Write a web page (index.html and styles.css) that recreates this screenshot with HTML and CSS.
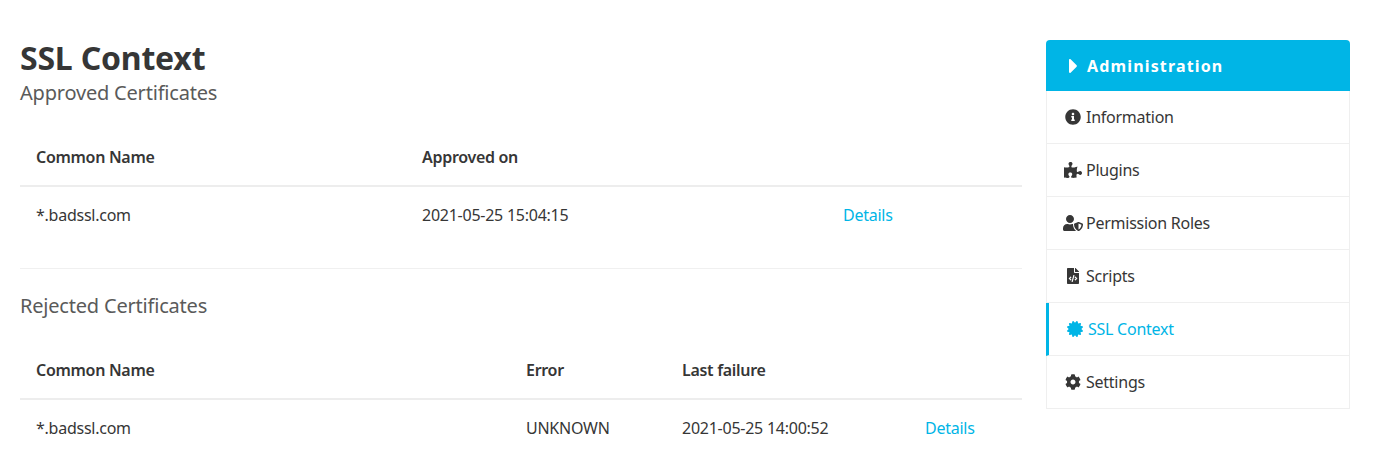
FILE: index.html
```html
<!DOCTYPE html>
<html lang="en">
<head>
<meta charset="utf-8">
<title>SSL Context</title>
<link rel="stylesheet" href="styles.css">
</head>
<body>
<div class="page">
  <main class="content">
    <h1 class="title">SSL Context</h1>
    <h2 class="subtitle first">Approved Certificates</h2>
    <table class="table approved">
      <colgroup><col class="a1"><col class="a2"><col></colgroup>
      <thead><tr><th>Common Name</th><th>Approved on</th><th></th></tr></thead>
      <tbody><tr><td>*.badssl.com</td><td>2021-05-25 15:04:15</td><td><a href="#">Details</a></td></tr></tbody>
    </table>
    <hr class="rule">
    <h2 class="subtitle rejected-title">Rejected Certificates</h2>
    <table class="table rejected">
      <colgroup><col class="r1"><col class="r2"><col class="r3"><col></colgroup>
      <thead><tr><th>Common Name</th><th>Error</th><th>Last failure</th><th></th></tr></thead>
      <tbody><tr><td>*.badssl.com</td><td>UNKNOWN</td><td>2021-05-25 14:00:52</td><td><a href="#">Details</a></td></tr></tbody>
    </table>
  </main>
  <aside class="sidebar">
    <div class="side-head">
      <svg class="caret" viewBox="0 0 192 512"><path d="M0 384.662V127.338c0-17.818 21.543-26.741 34.142-14.142l128.662 128.662c7.81 7.81 7.81 20.474 0 28.284L34.142 398.804C21.543 411.404 0 402.48 0 384.662z"/></svg>
      <span>Administration</span>
    </div>
    <nav class="menu">
      <a class="item" href="#"><span class="ico"><svg class="i16" viewBox="0 0 512 512"><path d="M256 8C119.043 8 8 119.083 8 256c0 136.997 111.043 248 248 248s248-111.003 248-248C504 119.083 392.957 8 256 8zm0 110c23.196 0 42 18.804 42 42s-18.804 42-42 42-42-18.804-42-42 18.804-42 42-42zm56 254c0 6.627-5.373 12-12 12h-88c-6.627 0-12-5.373-12-12v-24c0-6.627 5.373-12 12-12h12v-64h-12c-6.627 0-12-5.373-12-12v-24c0-6.627 5.373-12 12-12h64c6.627 0 12 5.373 12 12v100h12c6.627 0 12 5.373 12 12v24z"/></svg></span>Information</a>
      <a class="item" href="#"><span class="ico"><svg class="i18" viewBox="0 0 576 512"><path d="M519.442 288.651c-41.519 0-59.5 31.593-82.058 31.593C377.409 320.244 432 144 432 144s-196.288 80-196.288-3.297c0-35.827 36.288-46.25 36.288-85.985C272 19.216 243.885 0 210.539 0c-34.654 0-66.366 18.891-66.366 56.346 0 41.364 31.711 59.277 31.711 81.75C175.885 207.719 0 166.758 0 166.758v333.237s178.635 41.047 178.635-28.662c0-22.473-40-40.107-40-81.471 0-37.456 29.25-56.346 63.577-56.346 33.673 0 61.788 19.216 61.788 54.717 0 39.735-36.288 50.158-36.288 85.985 0 60.803 129.675 25.73 181.23 25.73 0 0-34.725-120.101 25.827-120.101 35.962 0 46.423 36.152 86.308 36.152C556.712 416 576 387.99 576 354.443c0-34.199-18.962-65.792-56.558-65.792z"/></svg></span>Plugins</a>
      <a class="item" href="#"><span class="ico"><svg class="i20" viewBox="0 0 640 512"><path d="M622.3 271.1l-115.2-45c-4.1-1.6-12.6-3.7-22.2 0l-115.2 45c-10.7 4.2-17.7 14-17.7 24.9 0 111.6 68.7 188.8 132.9 213.9 9.6 3.7 18 1.6 22.2 0C558.4 489.9 640 420.5 640 296c0-10.9-7-20.7-17.7-24.9zM496 462.4V273.3l95.5 37.3c-5.6 87.1-60.9 135.4-95.5 151.8zM224 256c70.7 0 128-57.3 128-128S294.7 0 224 0 96 57.3 96 128s57.3 128 128 128zm96 40c0-2.5.8-4.8 1.1-7.2-2.5-.1-4.9-.8-7.5-.8h-16.7c-22.2 10.2-46.9 16-72.9 16s-50.6-5.8-72.9-16h-16.7C60.2 288 0 348.2 0 422.4V464c0 26.5 21.5 48 48 48h352c6.8 0 13.3-1.5 19.2-4-54-42.9-99.2-116.7-99.2-212z"/></svg></span>Permission Roles</a>
      <a class="item" href="#"><span class="ico"><svg class="i12" viewBox="0 0 384 512"><path d="M384 121.941V128H256V0h6.059c6.365 0 12.47 2.529 16.971 7.029l97.941 97.941A24.005 24.005 0 0 1 384 121.941zM248 160c-13.2 0-24-10.8-24-24V0H24C10.745 0 0 10.745 0 24v464c0 13.255 10.745 24 24 24h336c13.255 0 24-10.745 24-24V160H248zM123.206 400.505a5.4 5.4 0 0 1-7.633.246l-64.866-60.812a5.4 5.4 0 0 1 0-7.879l64.866-60.812a5.4 5.4 0 0 1 7.633.246l19.579 20.885a5.4 5.4 0 0 1-.372 7.747L101.65 336l40.763 35.874a5.4 5.4 0 0 1 .372 7.747l-19.579 20.884zm51.295 50.479l-27.453-7.97a5.402 5.402 0 0 1-3.681-6.692l61.44-211.626a5.402 5.402 0 0 1 6.692-3.681l27.452 7.97a5.4 5.4 0 0 1 3.68 6.692l-61.44 211.626a5.397 5.397 0 0 1-6.69 3.681zm160.792-111.045l-64.866 60.812a5.4 5.4 0 0 1-7.633-.246l-19.58-20.885a5.4 5.4 0 0 1 .372-7.747L284.35 336l-40.763-35.874a5.4 5.4 0 0 1-.372-7.747l19.58-20.885a5.4 5.4 0 0 1 7.633-.246l64.866 60.812a5.4 5.4 0 0 1-.001 7.879z"/></svg></span>Scripts</a>
      <a class="item active" href="#"><span class="ico"><svg class="i16" viewBox="0 0 512 512"><path d="M458.622 255.92l45.985-45.005c13.708-12.977 7.316-36.039-10.664-40.339l-62.65-15.99 17.661-62.015c4.991-17.838-11.829-34.663-29.661-29.671l-61.994 17.667-15.984-62.671C337.085.197 313.765-6.276 300.99 7.228L256 53.57 211.011 7.229c-12.63-13.351-36.047-7.234-40.325 10.668l-15.984 62.671-61.995-17.667C74.87 57.907 58.056 74.738 63.046 92.572l17.661 62.015-62.65 15.99C.069 174.878-6.31 197.944 7.392 210.915l45.985 45.005-45.985 45.004c-13.708 12.977-7.316 36.039 10.664 40.339l62.65 15.99-17.661 62.015c-4.991 17.838 11.829 34.663 29.661 29.671l61.994-17.667 15.984 62.671c4.439 18.575 27.696 24.018 40.325 10.668L256 458.61l44.989 46.001c12.5 13.488 35.987 7.486 40.325-10.668l15.984-62.671 61.994 17.667c17.832 4.992 34.652-11.833 29.661-29.671l-17.661-62.015 62.65-15.99c17.98-4.3 24.371-27.362 10.664-40.339l-45.984-45.004z"/></svg></span>SSL Context</a>
      <a class="item" href="#"><span class="ico"><svg class="i16" viewBox="0 0 512 512"><path d="M487.4 315.7l-42.6-24.6c4.3-23.2 4.3-47 0-70.2l42.6-24.6c4.9-2.8 7.1-8.6 5.5-14-11.1-35.6-30-67.8-54.7-94.6-3.8-4.1-10-5.1-14.8-2.3L380.8 110c-17.9-15.4-38.5-27.3-60.8-35.1V25.8c0-5.6-3.9-10.5-9.4-11.7-36.7-8.2-74.3-7.8-109.2 0-5.5 1.2-9.4 6.1-9.4 11.7V75c-22.2 7.9-42.8 19.8-60.8 35.1L88.7 85.5c-4.9-2.8-11-1.9-14.8 2.3-24.7 26.7-43.6 58.9-54.7 94.6-1.7 5.4.6 11.2 5.5 14L67.3 221c-4.3 23.2-4.3 47 0 70.2l-42.6 24.6c-4.9 2.8-7.1 8.6-5.5 14 11.1 35.6 30 67.8 54.7 94.6 3.8 4.1 10 5.1 14.8 2.3l42.6-24.6c17.9 15.4 38.5 27.3 60.8 35.1v49.2c0 5.6 3.9 10.5 9.4 11.7 36.7 8.2 74.3 7.8 109.2 0 5.5-1.2 9.4-6.1 9.4-11.7v-49.2c22.2-7.9 42.8-19.8 60.8-35.1l42.6 24.6c4.9 2.8 11 1.9 14.8-2.3 24.7-26.7 43.6-58.9 54.7-94.6 1.5-5.5-.7-11.3-5.6-14.1zM256 336c-44.1 0-80-35.9-80-80s35.9-80 80-80 80 35.9 80 80-35.9 80-80 80z"/></svg></span>Settings</a>
    </nav>
  </aside>
</div>
</body>
</html>
```

FILE: styles.css
```css
* { box-sizing: border-box; }
html, body { margin: 0; height: 456px; overflow: hidden; background: #fff; }
body { font-family: "Noto Sans", sans-serif; font-size: 16px; color: #363636; letter-spacing: -0.25px; }
a { color: #00b5e6; text-decoration: none; }
.page { display: flex; align-items: flex-start; gap: 24px; padding: 40px 35px 0 20px; }
.content { width: 1002px; flex: none; }
.sidebar { width: 304px; flex: none; }
.title { margin: 0; font-size: 32px; line-height: 36px; font-weight: 700; letter-spacing: -0.2px; }
.subtitle { margin: 0; font-size: 20px; line-height: 28px; font-weight: 400; color: #5a5a5a; letter-spacing: -0.2px; }
.subtitle.first { margin-top: 3px; }
.table { width: 100%; border-collapse: collapse; table-layout: fixed; }
.approved { margin-top: 22px; }
.a1 { width: 386px; }
.a2 { width: 421px; }
.r1 { width: 490px; }
.r2 { width: 156px; }
.r3 { width: 243px; }
th { height: 57px; padding: 0 16px; text-align: left; font-weight: 600; letter-spacing: -0.3px; border-bottom: 2px solid #ededed; }
td { height: 58px; padding: 0 16px 2px; }
.rule { margin: 24px 0 0; border: 0; border-top: 1px solid #f0f0f0; }
.rejected-title { margin-top: 23px; }
.rejected { margin-top: 22px; }
.side-head { height: 51px; display: flex; align-items: center; padding-left: 23px; background: #00b5e6; border-radius: 4px 4px 0 0; color: #fff; font-weight: 700; letter-spacing: 1.15px; }
.caret { width: 9px; height: 24px; fill: #fff; margin-right: 9px; }
.menu { display: flex; flex-direction: column; border: 1px solid #efefef; border-top: 0; }
.item { height: 53px; display: flex; align-items: center; padding-left: 16px; color: #363636; border-bottom: 1px solid #efefef; }
.item:last-child { border-bottom: 0; height: 52px; }
.item.active { color: #00b5e6; border-left: 3px solid #00b5e6; margin-left: -1px; padding-left: 16px; }
.ico { width: 20px; margin-right: 3px; display: flex; justify-content: center; flex: none; }
.ico svg { height: 16px; fill: currentColor; display: block; }
.i12 { width: 12px; }
.i16 { width: 16px; }
.i18 { width: 18px; }
.i20 { width: 20px; }
```
